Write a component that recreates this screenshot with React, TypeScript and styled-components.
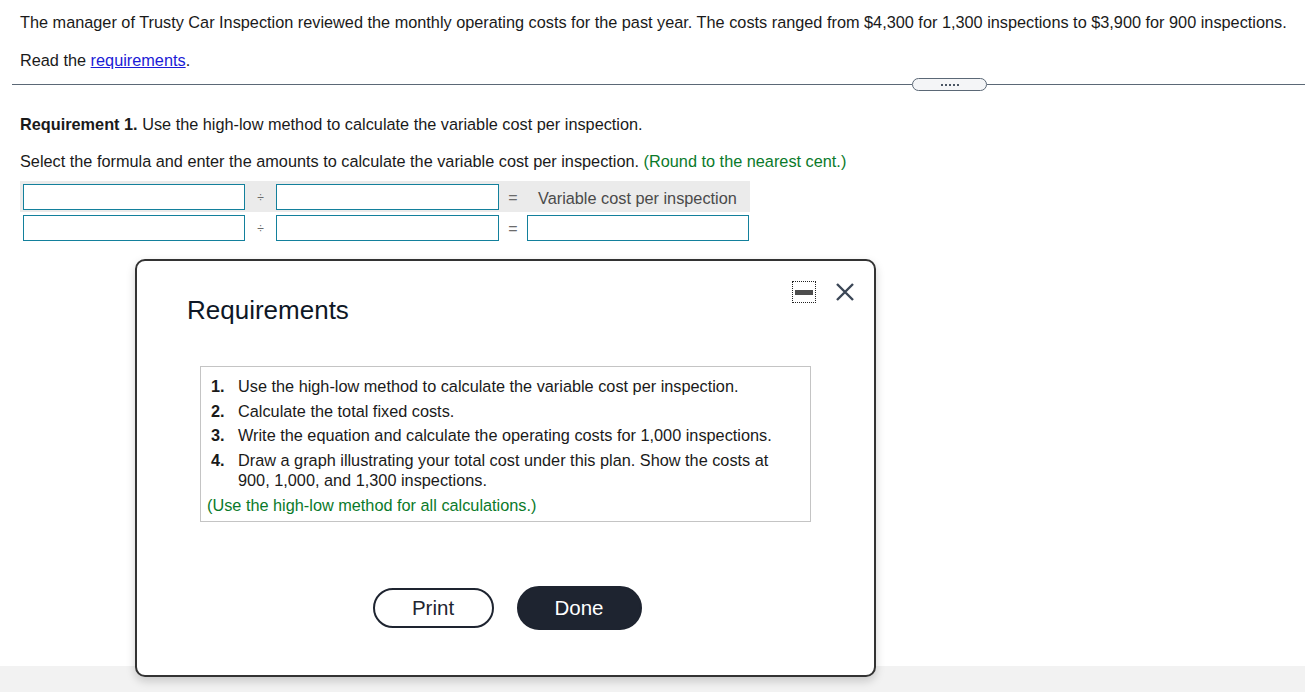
import React from 'react';
import styled, { createGlobalStyle } from 'styled-components';

const GlobalStyle = createGlobalStyle`
    html, body {
        margin: 0;
        padding: 0;
        background: #fff;
    }
    body {
        font-family: 'Liberation Sans', Arial, sans-serif;
        color: #1a1a1a;
    }
`;

const Page = styled.div`
    position: relative;
    min-height: 100vh;
    display: flex;
    flex-direction: column;
    overflow: hidden;
`;

const Main = styled.div`
    flex: 1;
`;

const Text = styled.p<{ $top: number }>`
    margin: ${(p) => p.$top}px 0 0 20px;
    font-size: 16.3px;
    line-height: 20px;
    white-space: nowrap;
`;

const Link = styled.a`
    color: #1b1bd6;
    text-decoration: underline;
    cursor: pointer;
`;

const Hint = styled.span`
    color: #0a7a2a;
`;

const Divider = styled.div`
    display: flex;
    align-items: center;
    height: 13px;
    margin: 8px 0 0 12px;

    .line {
        height: 1px;
        background: #5b6876;
    }
    .line.left {
        width: 900px;
    }
    .line.right {
        flex: 1;
    }
`;

const Pill = styled.div`
    width: 73px;
    height: 11px;
    border: 1px solid #5b6876;
    border-radius: 7px;
    background: #f4f5f7;
    display: flex;
    align-items: center;
    justify-content: center;
    gap: 2px;

    span {
        width: 2px;
        height: 2px;
        background: #4a5563;
    }
`;

const Formula = styled.div`
    margin: 10px 0 0 20px;
    width: 730px;
`;

const FormulaRow = styled.div<{ $shaded?: boolean }>`
    display: grid;
    grid-template-columns: 222px 31px 223px 28px 222px;
    align-items: center;
    height: 31px;
    padding-left: 3px;
    background: ${(p) => (p.$shaded ? '#ebebeb' : 'transparent')};
`;

const Box = styled.div`
    height: 26px;
    border: 1px solid #13809c;
    background: #fff;
    box-sizing: border-box;
`;

const Op = styled.div<{ $small?: boolean }>`
    text-align: center;
    font-size: ${(p) => (p.$small ? '12px' : '16px')};
    color: #6b6b6b;
    padding-top: 2px;
`;

const Label = styled.div`
    padding: 3px 0 0 11px;
    font-size: 16.3px;
    color: #4a4a4a;
    white-space: nowrap;
`;

const Footer = styled.div`
    height: 26px;
    background: #f2f2f2;
`;

const Dialog = styled.div`
    position: absolute;
    left: 135px;
    top: 259px;
    width: 741px;
    height: 418px;
    box-sizing: border-box;
    border: 2px solid #333;
    border-radius: 10px;
    background: #fff;
    box-shadow: 0 4px 10px rgba(0, 0, 0, 0.18);
    display: flex;
    flex-direction: column;
`;

const DialogHeader = styled.div`
    display: flex;
    justify-content: space-between;
    align-items: flex-start;
    padding: 20px 18px 0 50px;
`;

const Title = styled.h2`
    margin: 15px 0 0;
    font-size: 26px;
    line-height: 28px;
    font-weight: 400;
    color: #0e1726;
`;

const Controls = styled.div`
    display: flex;
    align-items: center;
    gap: 18px;
`;

const MinButton = styled.div`
    width: 24px;
    height: 22px;
    box-sizing: border-box;
    border: 1px dotted #222;
    display: flex;
    align-items: center;
    justify-content: center;

    span {
        width: 18px;
        height: 5px;
        background: #4d4d4d;
    }
`;

const CloseButton = styled.div`
    width: 22px;
    height: 22px;
    display: flex;
    align-items: center;
    justify-content: center;
`;

const ReqBox = styled.div`
    margin: 42px 0 0 63px;
    width: 611px;
    height: 156px;
    box-sizing: border-box;
    border: 1px solid #c4c4c4;
    padding: 9px 6px 0;
`;

const List = styled.ol`
    list-style: none;
    margin: 0;
    padding: 0 0 0 4px;
`;

const Item = styled.li`
    display: flex;
    font-size: 16.3px;
    line-height: 20px;
    margin-bottom: 4.7px;
    color: #1a1a1a;

    b {
        width: 27px;
        flex: none;
    }
`;

const ItemText = styled.span`
    max-width: 545px;
`;

const Note = styled.div`
    font-size: 16.3px;
    line-height: 20px;
    color: #0a7a2a;
`;

const Actions = styled.div`
    display: flex;
    justify-content: center;
    align-items: center;
    gap: 23px;
    margin-top: 64px;
    padding-left: 3px;
`;

const Button = styled.button<{ $primary?: boolean }>`
    font-family: 'Liberation Sans', Arial, sans-serif;
    font-size: 20.5px;
    box-sizing: border-box;
    width: ${(p) => (p.$primary ? '125px' : '121px')};
    height: ${(p) => (p.$primary ? '44px' : '40px')};
    border-radius: 22px;
    border: 2px solid #1e2430;
    background: ${(p) => (p.$primary ? '#1e2430' : '#fff')};
    color: ${(p) => (p.$primary ? '#fff' : '#1e2430')};
    cursor: pointer;
`;

const requirements = [
    'Use the high-low method to calculate the variable cost per inspection.',
    'Calculate the total fixed costs.',
    'Write the equation and calculate the operating costs for 1,000 inspections.',
    'Draw a graph illustrating your total cost under this plan. Show the costs at 900, 1,000, and 1,300 inspections.',
];

const App: React.FC = () => {
    return (
        <>
            <GlobalStyle />
            <Page>
                <Main>
                    <Text $top={12}>
                        The manager of Trusty Car Inspection reviewed the monthly operating costs for the past year. The costs ranged from $4,300 for 1,300 inspections to $3,900 for 900 inspections.
                    </Text>
                    <Text $top={18}>
                        Read the <Link>requirements</Link>.
                    </Text>
                    <Divider>
                        <div className="line left" />
                        <Pill>
                            <span />
                            <span />
                            <span />
                            <span />
                            <span />
                        </Pill>
                        <div className="line right" />
                    </Divider>
                    <Text $top={23}>
                        <b>Requirement 1.</b> Use the high-low method to calculate the variable cost per inspection.
                    </Text>
                    <Text $top={17}>
                        Select the formula and enter the amounts to calculate the variable cost per inspection. <Hint>(Round to the nearest cent.)</Hint>
                    </Text>
                    <Formula>
                        <FormulaRow $shaded>
                            <Box />
                            <Op $small>÷</Op>
                            <Box />
                            <Op>=</Op>
                            <Label>Variable cost per inspection</Label>
                        </FormulaRow>
                        <FormulaRow>
                            <Box />
                            <Op $small>÷</Op>
                            <Box />
                            <Op>=</Op>
                            <Box />
                        </FormulaRow>
                    </Formula>
                </Main>
                <Footer />

                <Dialog>
                    <DialogHeader>
                        <Title>Requirements</Title>
                        <Controls>
                            <MinButton>
                                <span />
                            </MinButton>
                            <CloseButton>
                                <svg width="20" height="18" viewBox="0 0 20 18">
                                    <path d="M2 1 L18 17 M18 1 L2 17" stroke="#3b4656" strokeWidth="2.4" fill="none" />
                                </svg>
                            </CloseButton>
                        </Controls>
                    </DialogHeader>
                    <ReqBox>
                        <List>
                            {requirements.map((r, i) => (
                                <Item key={i}>
                                    <b>{i + 1}.</b>
                                    <ItemText>{r}</ItemText>
                                </Item>
                            ))}
                        </List>
                        <Note>(Use the high-low method for all calculations.)</Note>
                    </ReqBox>
                    <Actions>
                        <Button>Print</Button>
                        <Button $primary>Done</Button>
                    </Actions>
                </Dialog>
            </Page>
        </>
    );
};

export default App;
